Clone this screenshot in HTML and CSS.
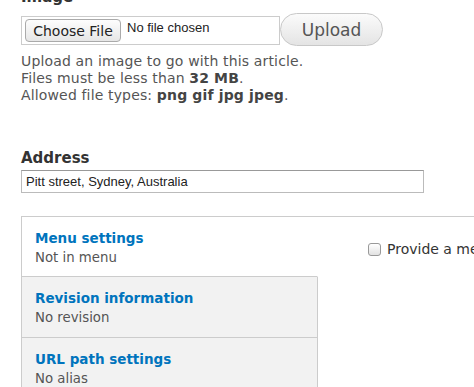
FILE: index.html
```html
<!DOCTYPE html>
<html>
<head>
<meta charset="utf-8">
<link rel="stylesheet" href="styles.css">
</head>
<body>
<div class="page">
  <div class="form-item image-item">
    <label class="label">Image</label>
    <div class="file-row">
      <div class="file-box">
        <button class="choose-btn" type="button">Choose File</button>
        <span class="no-file">No file chosen</span>
      </div>
      <button class="upload-btn" type="button">Upload</button>
    </div>
    <div class="description">
      <div>Upload an image to go with this article.</div>
      <div>Files must be less than <strong>32 MB</strong>.</div>
      <div>Allowed file types: <strong>png gif jpg jpeg</strong>.</div>
    </div>
  </div>

  <div class="form-item address-item">
    <label class="label">Address</label>
    <div class="text-input">Pitt street, Sydney, Australia</div>
  </div>

  <div class="vtabs">
    <ul class="vtabs-list">
      <li class="vtab selected">
        <a class="vtab-title">Menu settings</a>
        <span class="vtab-summary">Not in menu</span>
      </li>
      <li class="vtab">
        <a class="vtab-title">Revision information</a>
        <span class="vtab-summary">No revision</span>
      </li>
      <li class="vtab">
        <a class="vtab-title">URL path settings</a>
        <span class="vtab-summary">No alias</span>
      </li>
    </ul>
    <div class="vtabs-pane">
      <label class="check-row"><span class="checkbox"></span><span>Provide a menu link</span></label>
    </div>
  </div>
</div>
</body>
</html>
```
FILE: styles.css
```css
html, body {
  margin: 0;
  padding: 0;
  overflow: hidden;
  background: #fff;
}
body {
  font-family: "DejaVu Sans", "Lucida Grande", Verdana, sans-serif;
  font-size: 13px;
  color: #333;
  width: 474px;
  height: 387px;
}
.page {
  padding-left: 21px;
}
.form-item {
  display: flex;
  flex-direction: column;
}
.label {
  font-weight: bold;
  font-size: 15px;
  color: #333;
  line-height: 18px;
}
.image-item {
  margin-top: -12px;
}
.file-row {
  display: flex;
  align-items: flex-start;
  margin-top: 7px;
}
.file-box {
  box-sizing: border-box;
  width: 259px;
  height: 29px;
  margin-top: 3px;
  border: 1px solid #ccc;
  display: flex;
  align-items: flex-start;
  padding: 2px 3px;
  gap: 6px;
}
.choose-btn {
  box-sizing: border-box;
  width: 96px;
  height: 23px;
  border: 1px solid #aaa;
  border-radius: 4px;
  background: linear-gradient(#fdfdfd, #e6e6e6);
  font-family: "DejaVu Sans", sans-serif;
  font-size: 14px;
  color: #222;
  padding: 0;
  line-height: 20px;
}
.no-file {
  font-family: "Liberation Sans", Arial, sans-serif;
  font-size: 13px;
  color: #222;
  line-height: 16px;
  margin-top: 1px;
}
.upload-btn {
  box-sizing: border-box;
  width: 103px;
  height: 33px;
  border: 1px solid #c8c8c8;
  border-radius: 17px;
  background: linear-gradient(#fbfbfb, #e4e4e4);
  font-family: "DejaVu Sans", sans-serif;
  font-size: 17px;
  color: #555;
  padding: 0;
}
.description {
  margin-top: 7px;
  font-size: 14px;
  letter-spacing: 0.15px;
  line-height: 17px;
  color: #555;
}
.description strong {
  color: #444;
}
.address-item {
  margin-top: 45px;
}
.address-item .label {
  margin-bottom: 3px;
}
.text-input {
  box-sizing: border-box;
  width: 403px;
  height: 23px;
  border: 1px solid #bbb;
  border-top-color: #999;
  font-family: "Liberation Sans", Arial, sans-serif;
  font-size: 13px;
  color: #222;
  padding: 2px 4px;
  line-height: 17px;
}
.vtabs {
  margin-top: 23px;
  display: flex;
  width: 600px;
  border: 1px solid #ccc;
  border-right: none;
}
.vtabs-list {
  list-style: none;
  margin: 0;
  padding: 0;
  width: 296px;
  flex: none;
  background: #f2f2f2;
}
.vtab {
  display: flex;
  flex-direction: column;
  box-sizing: border-box;
  height: 61px;
  padding: 11px 13px 0;
  border-bottom: 1px solid #ccc;
  border-right: 1px solid #ccc;
  background: #f2f2f2;
}
.vtab.selected {
  background: #fff;
  border-right-color: #fff;
  height: 60px;
}
.vtab-title {
  font-weight: bold;
  font-size: 13.5px;
  color: #0074bd;
  line-height: 20px;
}
.vtab-summary {
  font-size: 13.3px;
  color: #555;
  line-height: 19px;
}
.vtabs-pane {
  flex: 1;
  padding: 24px 0 0 50px;
  background: #fff;
}
.check-row {
  display: flex;
  align-items: center;
  gap: 6px;
  font-size: 14px;
  color: #333;
}
.checkbox {
  box-sizing: border-box;
  width: 13px;
  height: 13px;
  border: 1px solid #999;
  border-radius: 3px;
  background: linear-gradient(#fff, #e2e2e2);
}
```
